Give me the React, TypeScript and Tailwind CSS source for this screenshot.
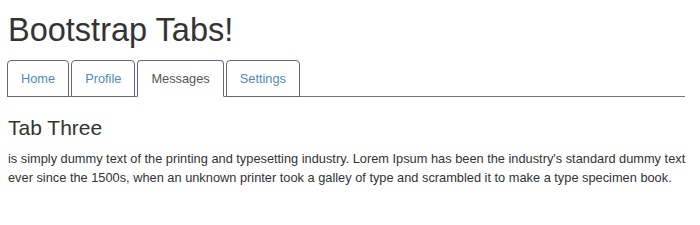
const tabs = ['Home', 'Profile', 'Messages', 'Settings']

export default function App() {
  const active = 'Messages'

  return (
    <div className="w-[700px] h-[225px] bg-white pl-[7px] pr-[15px] font-['Liberation_Sans',Arial,sans-serif] text-[#333]">
      <h1 className="pt-[13px] text-[32.5px] leading-[35px] pl-px">Bootstrap Tabs!</h1>

      {/* tabs */}
      <ul className="mt-[12px] flex border-b border-[#7a6fa3]">
        {tabs.map((t) => (
          <li key={t} className="mr-[2px] -mb-px">
            <a
              href="#"
              className={`block h-[37px] px-[13px] leading-[36px] text-[12.8px] rounded-t-[4px] border border-[#6b5f9a] ${
                t === active
                  ? 'border-b-white text-[#555] bg-white'
                  : 'text-[#4f8ac4]'
              }`}
            >
              {t}
            </a>
          </li>
        ))}
      </ul>

      {/* tab content */}
      <div className="pt-[19px]">
        <h3 className="text-[21px] leading-[23px] pl-px">Tab Three</h3>
        <p className="mt-[10px] w-[688px] text-[12.8px] leading-[19px] pl-px">
          is simply dummy text of the printing and typesetting industry. Lorem Ipsum has been the
          industry's standard dummy text ever since the 1500s, when an unknown printer took a galley
          of type and scrambled it to make a type specimen book.
        </p>
      </div>
    </div>
  )
}
